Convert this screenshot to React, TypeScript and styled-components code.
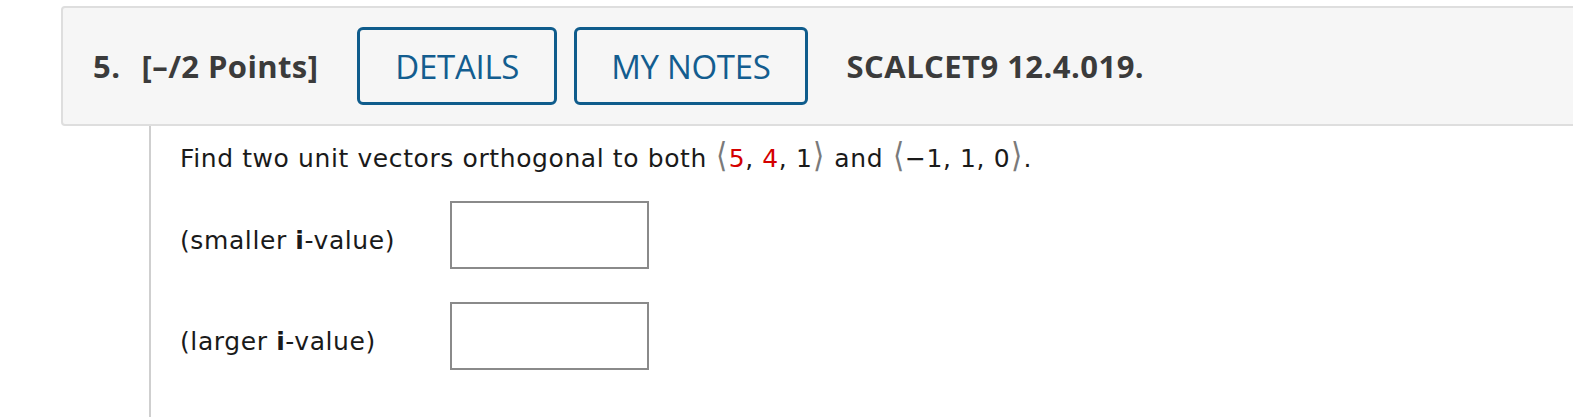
import React from "react";
import styled, { createGlobalStyle } from "styled-components";

const Global = createGlobalStyle`
  html, body { margin: 0; padding: 0; background: #ffffff; overflow: hidden; }
  body { width: 1573px; height: 417px; }
`;

const Page = styled.div`
  padding: 6px 0 0 61px;
  height: 417px;
  box-sizing: border-box;
  display: flex;
  flex-direction: column;
`;

const Header = styled.div`
  display: flex;
  align-items: center;
  height: 120px;
  box-sizing: border-box;
  margin-right: -20px;
  padding-left: 30px;
  background: #f6f6f6;
  border: 2px solid #dedede;
  border-radius: 4px;
  font-family: "Open Sans", "Noto Sans", sans-serif;
  font-weight: 700;
  color: #3b3b3b;
`;

const Num = styled.span`
  font-size: 31px;
  margin-right: 21px;
  letter-spacing: 0.5px;
`;

const Points = styled.span`
  font-size: 31px;
  letter-spacing: 0.4px;
  margin-right: 39px;
`;

const OutlineButton = styled.button<{ $pad: number }>`
  height: 78px;
  padding: 0 ${(p) => p.$pad}px;
  margin-right: 17px;
  background: transparent;
  border: 3px solid #0f5c8c;
  border-radius: 6px;
  color: #135d8f;
  font-family: "Open Sans", "Noto Sans", sans-serif;
  font-size: 33px;
  font-weight: 400;
  letter-spacing: -0.3px;
`;

const Code = styled.span`
  font-size: 31px;
  letter-spacing: 0.45px;
  margin-left: 22px;
`;

const Body = styled.div`
  flex: 1;
  margin-left: 88px;
  border-left: 2px solid #cfcfcf;
  padding: 14px 0 0 29px;
  font-family: "DejaVu Sans", Verdana, sans-serif;
  font-size: 25px;
  letter-spacing: 0.6px;
  color: #1a1a1a;
`;

const Question = styled.p`
  margin: 0;
  line-height: 30px;
`;

const Angle = styled.span`
  color: #7a7a7a;
  font-size: 34px;
  line-height: 30px;
  letter-spacing: 0;
  display: inline-block;
  transform: scaleX(0.85);
`;

const Red = styled.span`
  color: #d40000;
`;

const AnswerRow = styled.div<{ $top: number }>`
  display: flex;
  align-items: center;
  margin-top: ${(p) => p.$top}px;
`;

const Label = styled.span`
  width: 270px;
  padding-top: 10px;
`;

const Bold = styled.b`
  font-weight: 700;
`;

const Field = styled.input`
  width: 199px;
  height: 68px;
  box-sizing: border-box;
  border: 2px solid #8a8a8a;
  background: #fff;
  margin: 0;
  padding: 0 8px;
  font-size: 24px;
`;

export default function App() {
  return (
    <>
      <Global />
      <Page>
        <Header>
          <Num>5.</Num>
          <Points>[–/2 Points]</Points>
          <OutlineButton $pad={35}>DETAILS</OutlineButton>
          <OutlineButton $pad={34}>MY NOTES</OutlineButton>
          <Code>SCALCET9 12.4.019.</Code>
        </Header>
        <Body>
          <Question>
            Find two unit vectors orthogonal to both <Angle>⟨</Angle>
            <Red>5</Red>, <Red>4</Red>, 1<Angle>⟩</Angle> and <Angle>⟨</Angle>−1, 1, 0
            <Angle>⟩</Angle>.
          </Question>
          <AnswerRow $top={27}>
            <Label>
              (smaller <Bold>i</Bold>-value)
            </Label>
            <Field />
          </AnswerRow>
          <AnswerRow $top={33}>
            <Label>
              (larger <Bold>i</Bold>-value)
            </Label>
            <Field />
          </AnswerRow>
        </Body>
      </Page>
    </>
  );
}
